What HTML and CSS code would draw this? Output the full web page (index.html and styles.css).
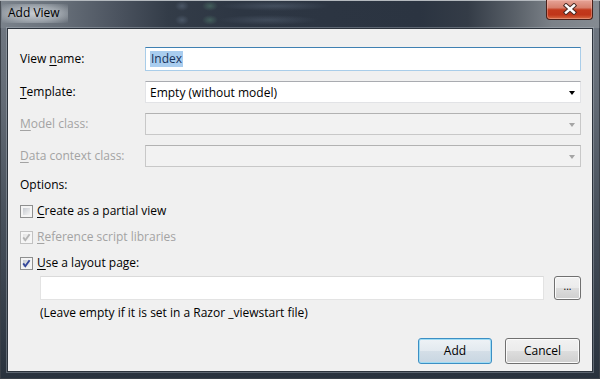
FILE: index.html
```html
<!DOCTYPE html>
<html>
<head>
<meta charset="utf-8">
<title>Add View</title>
<link rel="stylesheet" href="styles.css">
</head>
<body>
<div class="window">
  <div class="titlebar">
    <span class="title">Add View</span>
    <div class="close">
      <svg width="16" height="12" viewBox="0 0 16 12">
        <path d="M4 2.5 L12 9.5 M12 2.5 L4 9.5" stroke="#4a2a24" stroke-width="4.4" stroke-linecap="square" fill="none"/>
        <path d="M4 2.5 L12 9.5 M12 2.5 L4 9.5" stroke="#ffffff" stroke-width="2.4" stroke-linecap="square" fill="none"/>
      </svg>
    </div>
  </div>
  <div class="client">
    <div class="field first">
      <span class="lbl">View <u>n</u>ame:</span>
      <div class="textbox focused"><span class="sel">Index</span></div>
    </div>
    <div class="field">
      <span class="lbl"><u>T</u>emplate:</span>
      <div class="combo"><span>Empty (without model)</span><span class="arrow"></span></div>
    </div>
    <div class="field">
      <span class="lbl disabled"><u>M</u>odel class:</span>
      <div class="combo off"><span></span><span class="arrow"></span></div>
    </div>
    <div class="field">
      <span class="lbl disabled"><u>D</u>ata context class:</span>
      <div class="combo off"><span></span><span class="arrow"></span></div>
    </div>
    <div class="section">Options:</div>
    <div class="check">
      <span class="box"></span>
      <span><u>C</u>reate as a partial view</span>
    </div>
    <div class="check disabled">
      <span class="box"><svg width="11" height="11" viewBox="0 0 11 11"><path d="M2.2 5.4 L4.3 8.2 L8.6 2.2" stroke="#b4b4b4" stroke-width="1.9" fill="none"/></svg></span>
      <span><u>R</u>eference script libraries</span>
    </div>
    <div class="check">
      <span class="box"><svg width="11" height="11" viewBox="0 0 11 11"><path d="M2.2 5.4 L4.3 8.2 L8.6 2.2" stroke="#34479a" stroke-width="1.9" fill="none"/></svg></span>
      <span><u>U</u>se a layout page:</span>
    </div>
    <div class="layout-row">
      <div class="textbox plain"></div>
      <div class="btn browse">...</div>
    </div>
    <div class="hint">(Leave empty if it is set in a Razor _viewstart file)</div>
    <div class="actions">
      <div class="btn default">Add</div>
      <div class="btn">Cancel</div>
    </div>
  </div>
</div>
</body>
</html>
```
FILE: styles.css
```css
* { box-sizing: border-box; }
html, body { margin: 0; padding: 0; }
body {
  width: 600px;
  height: 379px;
  overflow: hidden;
  font-family: "Open Sans", "Noto Sans", "DejaVu Sans", sans-serif;
  font-size: 12px;
  color: #000;
}
u { text-decoration-thickness: 1px; text-underline-offset: 2px; }

.window {
  width: 600px;
  height: 379px;
  display: flex;
  flex-direction: column;
  background: linear-gradient(180deg, #737b85 0%, #646c76 25%, #454e59 60%, #29323d 100%);
  box-shadow: inset 0 0 0 1px #3a4048;
}

.titlebar {
  height: 28px;
  flex: none;
  display: flex;
  justify-content: space-between;
  align-items: flex-start;
  background:
    radial-gradient(ellipse 7px 5px at 182px 6px, rgba(120,138,160,0.35), rgba(0,0,0,0)),
    radial-gradient(ellipse 7px 5px at 182px 20px, rgba(120,138,160,0.35), rgba(0,0,0,0)),
    radial-gradient(ellipse 8px 5px at 210px 6px, rgba(95,150,125,0.4), rgba(0,0,0,0)),
    radial-gradient(ellipse 8px 5px at 210px 20px, rgba(95,150,125,0.4), rgba(0,0,0,0)),
    radial-gradient(ellipse 55px 5px at 275px 6px, rgba(110,125,145,0.35), rgba(0,0,0,0)),
    radial-gradient(ellipse 50px 5px at 268px 20px, rgba(110,125,145,0.3), rgba(0,0,0,0)),
    linear-gradient(90deg, #7a828b 0%, #676f79 10%, #4a525e 20%, #333c48 28%, #2d3643 40%, #2b3441 70%, #343c47 78%, #5a6169 86%, #7b8188 92%, #858b92 100%);
  box-shadow: inset 0 1px 0 #b4b9be, inset 1px 0 0 #4a5058, inset -1px 0 0 #4a5058;
}

.title {
  margin: 4px 0 0 2px;
  padding: 1px 8px 2px 6px;
  line-height: 16px;
  font-size: 12px;
  color: #000000;
  background: radial-gradient(ellipse at center, rgba(215,220,225,0.85) 0%, rgba(190,196,202,0.6) 55%, rgba(160,168,176,0) 100%);
}

.close {
  width: 47px;
  height: 20px;
  margin-right: 7px;
  display: flex;
  align-items: center;
  justify-content: center;
  border: 1px solid #4a2019;
  border-top: none;
  border-radius: 0 0 4px 4px;
  background: linear-gradient(180deg, #e6a497 0%, #d7806d 40%, #c2391c 52%, #bf3519 78%, #d66a42 100%);
  box-shadow: inset 0 0 0 1px rgba(255,210,200,0.35);
}
.close svg { display: block; margin-top: -1px; }

.client {
  flex: 1;
  margin: 0 7px 7px 7px;
  background: #f0f0f0;
  border: 1px solid #2c333c;
  box-shadow: 0 0 0 1px rgba(190,198,206,0.35);
  padding: 18px 11px 7px 12px;
  display: flex;
  flex-direction: column;
}

.field {
  display: flex;
  align-items: center;
  height: 22px;
  margin-top: 10px;
}
.field.first { height: 24px; margin-top: 0; }
.lbl {
  width: 125px;
  flex: none;
  line-height: 16px;
}
.lbl.disabled { color: #a3a3a3; }

.textbox {
  flex: 1;
  height: 100%;
  background: #fff;
  display: flex;
  align-items: center;
  padding-left: 4px;
}
.textbox.focused {
  border: 1px solid #a9cde9;
  border-top-color: #3f80b2;
}
.sel {
  background: #a9cdef;
  color: #16325a;
  line-height: 16px;
  padding: 0 1px;
}

.combo {
  flex: 1;
  height: 100%;
  background: #fff;
  border: 1px solid #e2e3e6;
  border-top-color: #a9abb0;
  display: flex;
  align-items: center;
  justify-content: space-between;
  padding: 0 5px 0 4px;
}
.combo.off {
  background: #f2f2f2;
  border: 1px solid #adadad;
  border-color: #b2b2b2 #c8c8c8 #c8c8c8 #c8c8c8;
}
.arrow {
  width: 0;
  height: 0;
  border-left: 3.5px solid transparent;
  border-right: 3.5px solid transparent;
  border-top: 4px solid #000;
  margin-top: 1px;
}
.combo.off .arrow { border-top-color: #a5a5a5; }

.section {
  margin-top: 10px;
  height: 16px;
  line-height: 16px;
}

.check {
  margin-top: 10px;
  height: 16px;
  line-height: 16px;
  display: flex;
  align-items: center;
  gap: 4px;
}
.check.disabled { color: #a3a3a3; }
.box {
  width: 13px;
  height: 13px;
  flex: none;
  border: 1px solid #8e8f8f;
  padding: 2px;
  background: linear-gradient(135deg, #c6cad0, #f4f4f4) content-box, #f4f4f4;
  position: relative;
}
.box svg { position: absolute; left: 0; top: 0; }
.check.disabled .box {
  border-color: #c2c2c2;
  background: linear-gradient(135deg, #e4e4e4, #f6f6f6) content-box, #f6f6f6;
}

.layout-row {
  margin-top: 5px;
  margin-left: 20px;
  height: 24px;
  display: flex;
  gap: 10px;
}
.textbox.plain {
  border: 1px solid #e3e3e3;
  border-top-color: #dadada;
}

.hint {
  margin-top: 5px;
  margin-left: 20px;
  height: 16px;
  line-height: 16px;
}

.btn {
  height: 26px;
  width: 75px;
  border: 1px solid #707070;
  border-radius: 3px;
  background: linear-gradient(180deg, #f2f2f2 0%, #ebebeb 50%, #dddddd 51%, #cfcfcf 100%);
  box-shadow: inset 0 0 0 1px #fbfbfb;
  display: flex;
  align-items: center;
  justify-content: center;
  line-height: 16px;
}
.btn.browse {
  width: 27px;
  height: 24px;
  font-size: 10px;
  padding-bottom: 4px;
}
.btn.default {
  width: 74px;
  border-color: #3c8fc4;
  background: linear-gradient(180deg, #eef2f6 0%, #e2e9ef 50%, #d4dee7 51%, #c8d6e2 100%);
  box-shadow: inset 0 0 0 1px #9fdcf4;
}

.actions {
  margin-top: auto;
  display: flex;
  justify-content: flex-end;
  gap: 13px;
  padding-right: 1px;
}
```
